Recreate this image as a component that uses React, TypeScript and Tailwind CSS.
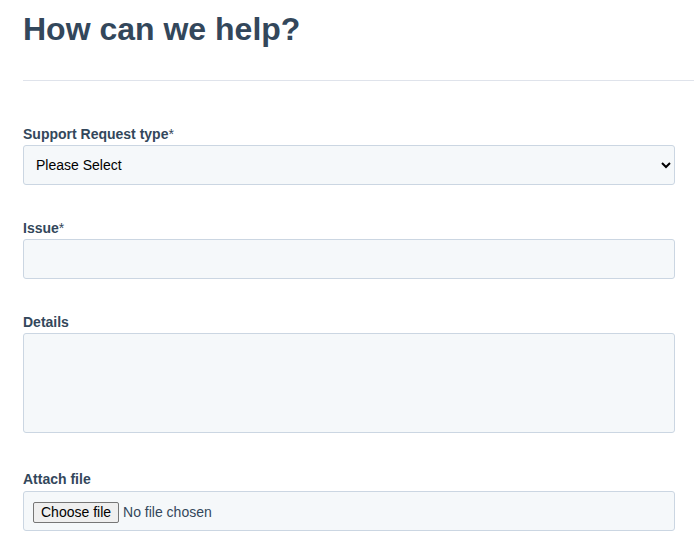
export default function App() {
  const field =
    "block w-[652px] rounded-[3px] border border-[#cbd6e2] bg-[#f5f8fa] text-[14px] text-[#33475b] outline-none";
  const label = "block text-[14px] font-bold leading-5 text-[#33475b] mb-px";

  return (
    <div className="min-h-screen bg-white font-['Liberation_Sans',Arial,sans-serif]">
      <h1 className="pl-[23px] pt-[10px] text-[32px] font-bold leading-[38px] text-[#33475b]">
        How can we help?
      </h1>
      <div className="ml-[23px] mt-[32px] h-px bg-[#dfe3eb]" />

      <form className="pl-[23px] pt-[43px]">
        <label className={label}>
          Support Request type<span className="font-normal">*</span>
        </label>
        <select className={`${field} h-10 pl-[8px] pr-2 text-black`} defaultValue="">
          <option value="">Please Select</option>
          <option>Billing</option>
          <option>Technical</option>
        </select>

        <label className={`${label} mt-[33px]`}>
          Issue<span className="font-normal">*</span>
        </label>
        <input type="text" className={`${field} h-10 px-3`} />

        <label className={`${label} mt-[33px]`}>Details</label>
        <textarea className={`${field} mt-px h-[100px] resize-none px-3 py-2`} />

        <label className={`${label} mt-[36px]`}>Attach file</label>
        <label className={`${field} mt-[2px] flex h-10 cursor-pointer items-center pl-[9px] pt-[3px]`}>
          <input type="file" className="hidden" />
          <span className="rounded-[2px] border border-[#767676] bg-[#efefef] px-[7px] leading-[19px] text-black">
            Choose file
          </span>
          <span className="ml-[4px] text-[#33475b]">No file chosen</span>
        </label>
      </form>
    </div>
  );
}
